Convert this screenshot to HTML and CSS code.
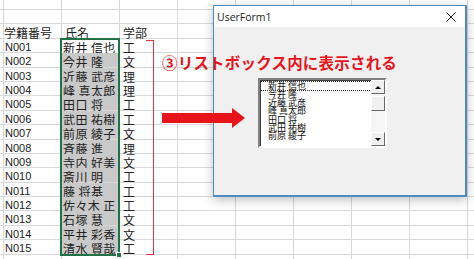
FILE: index.html
```html
<!DOCTYPE html>
<html lang="ja">
<head>
  <meta charset="UTF-8" />
  <title>リストボックス</title>
  <link rel="stylesheet" href="styles.css">
</head>
<body>
<div class="sheet">
  <div class="row"></div>
  <div class="row"></div>
  <div class="row"><div class="cell">学籍番号</div><div class="cell">氏名</div><div class="cell">学部</div></div>
  <div class="row"><div class="cell id">N001</div><div class="cell name first">新井 信也</div><div class="cell">工</div></div>
  <div class="row"><div class="cell id">N002</div><div class="cell name">今井 隆</div><div class="cell">文</div></div>
  <div class="row"><div class="cell id">N003</div><div class="cell name">近藤 武彦</div><div class="cell">理</div></div>
  <div class="row"><div class="cell id">N004</div><div class="cell name">峰 真太郎</div><div class="cell">理</div></div>
  <div class="row"><div class="cell id">N005</div><div class="cell name">田口 将</div><div class="cell">工</div></div>
  <div class="row"><div class="cell id">N006</div><div class="cell name">武田 祐樹</div><div class="cell">工</div></div>
  <div class="row"><div class="cell id">N007</div><div class="cell name">前原 綾子</div><div class="cell">文</div></div>
  <div class="row"><div class="cell id">N008</div><div class="cell name">斉藤 進</div><div class="cell">理</div></div>
  <div class="row"><div class="cell id">N009</div><div class="cell name">寺内 好美</div><div class="cell">文</div></div>
  <div class="row"><div class="cell id">N010</div><div class="cell name">斎川 明</div><div class="cell">工</div></div>
  <div class="row"><div class="cell id">N011</div><div class="cell name">藤 将基</div><div class="cell">工</div></div>
  <div class="row"><div class="cell id">N012</div><div class="cell name">佐々木 正</div><div class="cell">工</div></div>
  <div class="row"><div class="cell id">N013</div><div class="cell name">石塚 慧</div><div class="cell">文</div></div>
  <div class="row"><div class="cell id">N014</div><div class="cell name">平井 彩香</div><div class="cell">文</div></div>
  <div class="row"><div class="cell id">N015</div><div class="cell name">清水 賢哉</div><div class="cell">工</div></div>
  <div class="row"></div>
</div>

<div class="selection"><span class="handle"></span></div>
<div class="bracket"></div>

<div class="userform">
  <div class="titlebar">
    <span class="title">UserForm1</span>
    <svg class="close" width="10" height="10" viewBox="0 0 10 10">
      <path d="M0.5 0.5 L9.5 9.5 M9.5 0.5 L0.5 9.5" stroke="#222" stroke-width="1" fill="none"/>
    </svg>
  </div>
  <div class="form-body">
    <div class="listbox">
      <div class="items">
        <div class="item focused">新井 信也</div>
        <div class="item">今井 隆</div>
        <div class="item">近藤 武彦</div>
        <div class="item">峰 真太郎</div>
        <div class="item">田口 将</div>
        <div class="item">武田 祐樹</div>
        <div class="item">前原 綾子</div>
      </div>
      <div class="scrollbar">
        <div class="sb-btn"><span class="tri up"></span></div>
        <div class="sb-track"><div class="sb-thumb"></div></div>
        <div class="sb-btn"><span class="tri down"></span></div>
      </div>
    </div>
  </div>
</div>

<div class="note">③リストボックス内に表示される</div>
<svg class="arrow" width="84" height="24" viewBox="0 0 84 24">
  <path d="M0 5 H70 V0 L83 10 L70 20 V15 H0 Z" fill="#e8141b"/>
</svg>
</body>
</html>
```

FILE: styles.css
```css
body {
  margin: 0;
  width: 474px;
  height: 259px;
  overflow: hidden;
  position: relative;
  background: #fff;
  font-family: "Noto Sans CJK JP", sans-serif;
}
.sheet {
  margin-top: -4.4px;
  background-image: linear-gradient(to right, transparent 57px, #d9d9d9 57px);
  background-size: 58px 100%;
  background-position: 4px 0;
}
.row {
  height: 14.4px;
  box-sizing: border-box;
  border-bottom: 1px solid #d9d9d9;
  display: grid;
  grid-template-columns: 61px 58px 58px;
}
.cell {
  font-size: 12px;
  line-height: 11px;
  padding: 3px 0 0 4px;
  color: #222;
  white-space: nowrap;
}
.cell.id {
  font-family: "Liberation Sans", sans-serif;
  font-size: 11px;
  padding-left: 5px;
}
.cell.name {
  background: #c9c9c9;
  letter-spacing: 0.4px;
  padding-left: 2px;
}
.cell.name.first {
  background: #fff;
}
.selection {
  position: absolute;
  left: 60px;
  top: 38px;
  width: 56px;
  height: 214px;
  border: 2px solid #217346;
}
.handle {
  position: absolute;
  right: -4px;
  bottom: -4px;
  width: 4px;
  height: 4px;
  background: #217346;
  border: 1px solid #fff;
}
.bracket {
  position: absolute;
  left: 146px;
  top: 40px;
  width: 7px;
  height: 213px;
  border: 1.5px solid #e0343f;
  border-left: none;
}
.userform {
  position: absolute;
  left: 213px;
  top: 5px;
  width: 251px;
  height: 189px;
  border: 1px solid #4a8cc4;
  border-bottom-width: 2px;
  border-right-width: 2px;
  background: #f0f0f0;
  box-shadow: 0 3px 10px rgba(0, 0, 0, 0.25);
}
.titlebar {
  height: 21px;
  background: #fff;
  display: flex;
  align-items: center;
  justify-content: space-between;
  padding: 0 9px 0 3px;
}
.title {
  font-family: "Open Sans", sans-serif;
  font-size: 10.5px;
  color: #222;
}
.close {
  margin-top: 1px;
}
.form-body {
  padding: 51px 0 0 44px;
}
.listbox {
  width: 129px;
  height: 70px;
  box-sizing: border-box;
  background: #fff;
  border: 2px solid;
  border-color: #808080 #fff #fff #808080;
  box-shadow: inset 1px 1px 0 #404040;
  display: flex;
  overflow: hidden;
}
.items {
  flex: 1;
  padding: 2px 0 0 1px;
  overflow: hidden;
}
.item {
  font-size: 9px;
  line-height: 8.4px;
  height: 8.4px;
  padding-left: 7px;
  color: #111;
  white-space: nowrap;
}
.item.focused {
  outline: 1px dotted #333;
  outline-offset: 0;
}
.scrollbar {
  width: 14px;
  display: flex;
  flex-direction: column;
  background: #f0f0f0;
}
.sb-btn {
  height: 14px;
  box-sizing: border-box;
  background: #f0f0f0;
  border: 1px solid;
  border-color: #fff #696969 #696969 #fff;
  display: flex;
  align-items: center;
  justify-content: center;
}
.sb-track {
  flex: 1;
  background: #f6f6f6;
  padding-top: 2px;
}
.sb-thumb {
  height: 15px;
  box-sizing: border-box;
  background: #f0f0f0;
  border: 1px solid;
  border-color: #fff #696969 #696969 #fff;
}
.tri {
  width: 0;
  height: 0;
  border-left: 3px solid transparent;
  border-right: 3px solid transparent;
}
.tri.up {
  border-bottom: 3px solid #000;
}
.tri.down {
  border-top: 3px solid #000;
}
.note {
  position: absolute;
  left: 162px;
  top: 51px;
  font-size: 15.5px;
  font-weight: bold;
  color: #e8141b;
  white-space: nowrap;
  letter-spacing: 0.2px;
}
.arrow {
  position: absolute;
  left: 162px;
  top: 108px;
}
```
